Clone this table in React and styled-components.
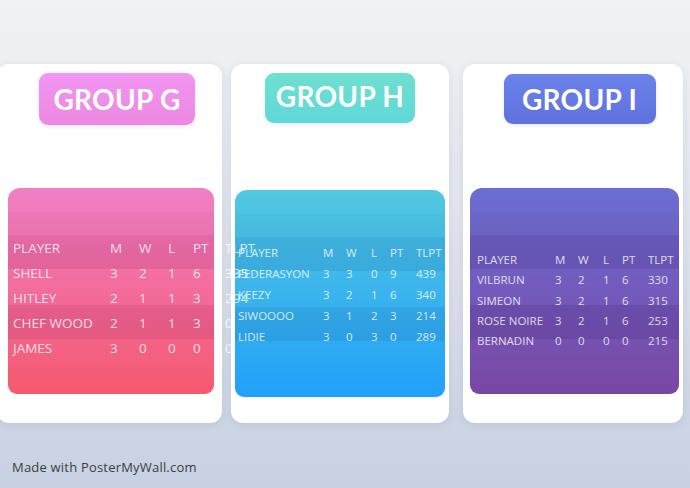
import React from "react";
import styled, { createGlobalStyle } from "styled-components";

const Global = createGlobalStyle`
  html, body { margin: 0; padding: 0; }
  body { font-family: "Open Sans", "Liberation Sans", sans-serif; }
  #root { min-height: 488px; }
`;

const Page = styled.div`
  width: 690px;
  height: 488px;
  overflow: hidden;
  background: linear-gradient(to bottom, #f1f2f5 0px, #eceff3 70px, #d9dfe9 300px, #c7d1e2 488px);
  display: flex;
  flex-direction: column;
`;

const CardRow = styled.div`
  display: grid;
  grid-template-columns: 225px 218px 225px;
  column-gap: 9px;
  margin-top: 64px;
  margin-left: -3px;
`;

const Card = styled.section`
  height: 359px;
  box-sizing: border-box;
  background: #ffffff;
  border-radius: 12px;
  box-shadow: 0 2px 8px rgba(110, 130, 165, 0.18);
  padding-top: ${(p) => p.$padTop}px;
  margin-left: ${(p) => p.$offset || 0}px;
  display: flex;
  flex-direction: column;
  align-items: center;
`;

const Badge = styled.div`
  width: ${(p) => p.$w}px;
  height: ${(p) => p.$h}px;
  margin-left: ${(p) => p.$shift * 2}px;
  border-radius: 9px;
  background: linear-gradient(to bottom, ${(p) => p.$from}, ${(p) => p.$to});
  box-shadow: 0 2px 4px rgba(0, 0, 0, 0.08);
  display: flex;
  align-items: center;
  justify-content: center;
  color: #ffffff;
  font-family: "Lato", "Open Sans", sans-serif;
  font-weight: 700;
  font-size: 28px;
  letter-spacing: 0.3px;
  padding-bottom: ${(p) => p.$lift || 0}px;
  box-sizing: border-box;
`;

const Panel = styled.div`
  align-self: stretch;
  margin: auto ${(p) => p.$right}px ${(p) => p.$bottom}px ${(p) => p.$left}px;
  height: ${(p) => p.$height}px;
  box-sizing: border-box;
  border-radius: 12px 12px 9px 9px;
  padding-top: ${(p) => p.$padTop}px;
  padding-left: ${(p) => p.$padLeft}px;
  background:
    linear-gradient(
      to bottom,
      rgba(0, 0, 0, 0) 24px,
      rgba(0, 0, 0, 0.025) 24px,
      rgba(0, 0, 0, 0.025) 47px,
      ${(p) => p.$band} 47px,
      ${(p) => p.$band} 81px,
      rgba(0, 0, 0, 0) 81px,
      rgba(0, 0, 0, 0) 117px,
      ${(p) => p.$band} 117px,
      ${(p) => p.$band} 151px,
      rgba(0, 0, 0, 0) 151px
    ),
    linear-gradient(to bottom, ${(p) => p.$from}, ${(p) => p.$to});
`;

const Table = styled.div`
  position: relative;
  z-index: 1;
  display: flex;
  flex-direction: column;
  color: rgba(255, 255, 255, 0.8);
  font-family: "Open Sans", "Liberation Sans", sans-serif;
  font-size: ${(p) => p.$size}px;
  white-space: nowrap;
`;

const Row = styled.div`
  display: grid;
  grid-template-columns: ${(p) => p.$cols};
  height: ${(p) => p.$h}px;
  line-height: ${(p) => p.$h}px;
`;

const Cell = styled.span`
  display: block;
`;

const Footer = styled.footer`
  margin-top: auto;
  margin-bottom: 12px;
  padding-left: 12px;
  font-family: "Open Sans", "Liberation Sans", sans-serif;
  font-size: 13px;
  letter-spacing: 0.2px;
  color: #3a3d45;
`;

const groups = [
  {
    name: "GROUP G",
    card: { padTop: 9, offset: 0 },
    badge: { w: 156, h: 52, shift: 7.5, from: "#f196f2", to: "#ec88e2", lift: 0 },
    panel: {
      left: 11, right: 8, bottom: 29, height: 206, padTop: 47.5, padLeft: 5,
      from: "#f07fc6", to: "#f5596f", band: "rgba(150,30,100,0.16)",
    },
    table: { size: 13.5, h: 25, cols: "97px 29px 29px 25px 32px auto" },
    rows: [
      ["PLAYER", "M", "W", "L", "PT", "TLPT"],
      ["SHELL", "3", "2", "1", "6", "335"],
      ["HITLEY", "2", "1", "1", "3", "294"],
      ["CHEF WOOD", "2", "1", "1", "3", "0"],
      ["JAMES", "3", "0", "0", "0", "0"],
    ],
  },
  {
    name: "GROUP H",
    card: { padTop: 9, offset: 0 },
    badge: { w: 150, h: 50, shift: 0, from: "#6fe0cf", to: "#5fd8da", lift: 4 },
    panel: {
      left: 4, right: 4, bottom: 26, height: 207, padTop: 51.5, padLeft: 3,
      from: "#52c8e0", to: "#22a0fa", band: "rgba(20,90,150,0.15)",
    },
    table: { size: 11.5, h: 21, cols: "85px 23px 25px 19px 26px auto" },
    rows: [
      ["PLAYER", "M", "W", "L", "PT", "TLPT"],
      ["FEDERASYON", "3", "3", "0", "9", "439"],
      ["KEEZY", "3", "2", "1", "6", "340"],
      ["SIWOOOO", "3", "1", "2", "3", "214"],
      ["LIDIE", "3", "0", "3", "0", "289"],
    ],
  },
  {
    name: "GROUP I",
    card: { padTop: 10, offset: 5 },
    badge: { w: 152, h: 50, shift: 6.5, from: "#6b82e9", to: "#5f72df", lift: 0 },
    panel: {
      left: 7, right: 4, bottom: 29, height: 206, padTop: 62, padLeft: 7,
      from: "#6b6ed3", to: "#7a47a3", band: "rgba(50,20,100,0.16)",
    },
    table: { size: 11.5, h: 20.25, cols: "78px 23px 25px 19px 26px auto" },
    rows: [
      ["PLAYER", "M", "W", "L", "PT", "TLPT"],
      ["VILBRUN", "3", "2", "1", "6", "330"],
      ["SIMEON", "3", "2", "1", "6", "315"],
      ["ROSE NOIRE", "3", "2", "1", "6", "253"],
      ["BERNADIN", "0", "0", "0", "0", "215"],
    ],
  },
];

export default function App() {
  return (
    <>
      <Global />
      <Page>
        <CardRow>
          {groups.map((g) => (
            <Card key={g.name} $padTop={g.card.padTop} $offset={g.card.offset}>
              <Badge
                $w={g.badge.w}
                $h={g.badge.h}
                $shift={g.badge.shift}
                $from={g.badge.from}
                $to={g.badge.to}
                $lift={g.badge.lift}
              >
                {g.name}
              </Badge>
              <Panel
                $left={g.panel.left}
                $right={g.panel.right}
                $bottom={g.panel.bottom}
                $height={g.panel.height}
                $padTop={g.panel.padTop}
                $padLeft={g.panel.padLeft}
                $from={g.panel.from}
                $to={g.panel.to}
                $band={g.panel.band}
              >
                <Table $size={g.table.size}>
                  {g.rows.map((r, i) => (
                    <Row key={i} $cols={g.table.cols} $h={g.table.h}>
                      {r.map((c, j) => (
                        <Cell key={j}>{c}</Cell>
                      ))}
                    </Row>
                  ))}
                </Table>
              </Panel>
            </Card>
          ))}
        </CardRow>
        <Footer>Made with PosterMyWall.com</Footer>
      </Page>
    </>
  );
}
